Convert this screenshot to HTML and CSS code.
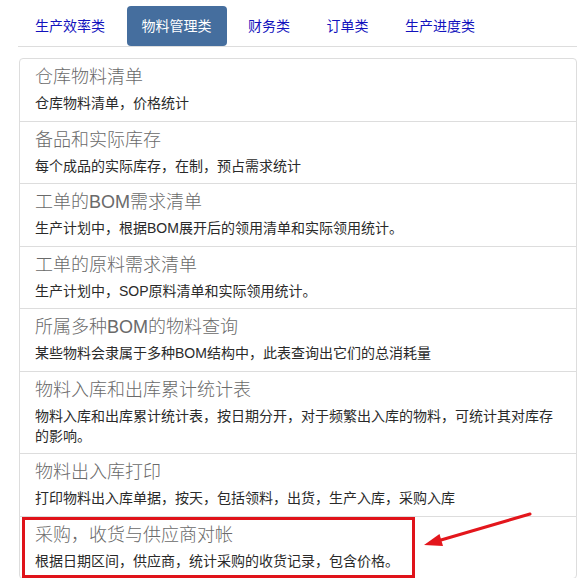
FILE: index.html
```html
<!DOCTYPE html>
<html lang="zh-CN">
<head>
    <meta charset="UTF-8">
    <meta name="viewport" content="width=device-width, initial-scale=1.0">
    <title>报表分类</title>
    <link rel="stylesheet" href="styles.css">
</head>
<body>
    <div class="page">
        <ul class="nav-pills">
            <li><a href="#">生产效率类</a></li>
            <li class="active"><a href="#">物料管理类</a></li>
            <li><a href="#">财务类</a></li>
            <li><a href="#">订单类</a></li>
            <li><a href="#">生产进度类</a></li>
        </ul>

        <div class="list-group">
            <a href="#" class="list-group-item">
                <h4 class="item-title">仓库物料清单</h4>
                <p class="item-text">仓库物料清单，价格统计</p>
            </a>
            <a href="#" class="list-group-item">
                <h4 class="item-title">备品和实际库存</h4>
                <p class="item-text">每个成品的实际库存，在制，预占需求统计</p>
            </a>
            <a href="#" class="list-group-item">
                <h4 class="item-title">工单的BOM需求清单</h4>
                <p class="item-text">生产计划中，根据BOM展开后的领用清单和实际领用统计。</p>
            </a>
            <a href="#" class="list-group-item">
                <h4 class="item-title">工单的原料需求清单</h4>
                <p class="item-text">生产计划中，SOP原料清单和实际领用统计。</p>
            </a>
            <a href="#" class="list-group-item">
                <h4 class="item-title">所属多种BOM的物料查询</h4>
                <p class="item-text">某些物料会隶属于多种BOM结构中，此表查询出它们的总消耗量</p>
            </a>
            <a href="#" class="list-group-item">
                <h4 class="item-title">物料入库和出库累计统计表</h4>
                <p class="item-text">物料入库和出库累计统计表，按日期分开，对于频繁出入库的物料，可统计其对库存的影响。</p>
            </a>
            <a href="#" class="list-group-item">
                <h4 class="item-title">物料出入库打印</h4>
                <p class="item-text">打印物料出入库单据，按天，包括领料，出货，生产入库，采购入库</p>
            </a>
            <a href="#" class="list-group-item marked">
                <h4 class="item-title">采购，收货与供应商对帐</h4>
                <p class="item-text">根据日期区间，供应商，统计采购的收货记录，包含价格。</p>
                <!-- annotation drawn over the screenshot -->
                <span class="mark-box"></span>
                <svg class="mark-arrow" width="140" height="50" viewBox="0 0 140 50">
                    <line x1="110" y1="5" x2="21" y2="31" stroke="#e3161c" stroke-width="3" stroke-linecap="round"/>
                    <polygon points="4,36 23,37 19.5,25" fill="#e3161c"/>
                </svg>
            </a>
        </div>
    </div>
</body>
</html>
```

FILE: styles.css
```css
body {
    margin: 0;
    font-family: "Liberation Sans", "Noto Sans CJK SC", sans-serif;
    font-size: 14px;
    color: #333;
    background: #fff;
}
.page {
    padding: 6px 6px 0 18px;
}
/* tabs */
.nav-pills {
    display: flex;
    gap: 6.5px;
    list-style: none;
    margin: 0;
    padding: 0 0 0 2px;
    border-bottom: 1px solid #ddd;
}
.nav-pills a {
    display: block;
    padding: 10px 15px;
    line-height: 20px;
    color: #1212bd;
    text-decoration: none;
    border-radius: 4px;
}
.nav-pills .active a {
    background-color: #456e9e;
    color: #fff;
}
/* report list */
.list-group {
    margin: 11px 0 0 1px;
}
.list-group-item {
    position: relative;
    display: block;
    padding: 8px 15px 7.5px;
    border: 1px solid #ddd;
    margin-bottom: -1px;
    text-decoration: none;
    background: #fff;
}
.list-group-item:first-child {
    border-top-left-radius: 4px;
    border-top-right-radius: 4px;
}
.list-group-item:last-child {
    border-bottom-left-radius: 4px;
    border-bottom-right-radius: 4px;
}
.item-title {
    margin: 0 0 6px;
    font-size: 18px;
    line-height: 20px;
    font-weight: 300;
    color: #6a6a6a;
}
.item-text {
    margin: 0;
    font-size: 14px;
    line-height: 20px;
    color: #2a2a2a;
}
.mark-box {
    position: absolute;
    left: 2px;
    top: 0;
    width: 393px;
    height: 61px;
    box-sizing: border-box;
    border: 3px solid #e0131a;
}
.mark-arrow {
    position: absolute;
    left: 400px;
    top: -8px;
}
```
